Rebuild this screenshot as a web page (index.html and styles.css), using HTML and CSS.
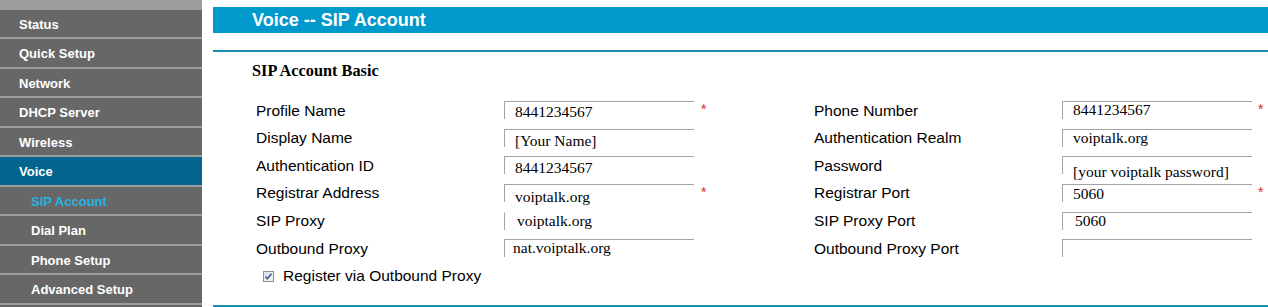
FILE: index.html
```html
<!DOCTYPE html>
<html>
<head>
<meta charset="utf-8">
<title>Voice -- SIP Account</title>
<link rel="stylesheet" href="styles.css">
</head>
<body>
<div class="page">
  <nav class="sidebar">
    <div class="nav-item">Status</div>
    <div class="nav-item">Quick Setup</div>
    <div class="nav-item">Network</div>
    <div class="nav-item">DHCP Server</div>
    <div class="nav-item">Wireless</div>
    <div class="nav-item active">Voice</div>
    <div class="nav-item sub current">SIP Account</div>
    <div class="nav-item sub">Dial Plan</div>
    <div class="nav-item sub">Phone Setup</div>
    <div class="nav-item sub">Advanced Setup</div>
    <div class="nav-item"></div>
  </nav>
  <main class="main">
    <div class="banner">Voice -- SIP Account</div>
    <div class="rule top-rule"></div>
    <h2 class="section-title">SIP Account Basic</h2>
    <div class="form-grid">
      <div class="label">Profile Name</div>
      <div class="cell"><div class="field pad-b">8441234567</div><span class="req">*</span></div>
      <div class="label">Phone Number</div>
      <div class="cell"><div class="field pad-a">8441234567</div><span class="req right">*</span></div>

      <div class="label">Display Name</div>
      <div class="cell"><div class="field pad-b2">[Your Name]</div></div>
      <div class="label">Authentication Realm</div>
      <div class="cell"><div class="field pad-a">voiptalk.org</div></div>

      <div class="label">Authentication ID</div>
      <div class="cell"><div class="field pad-b">8441234567</div></div>
      <div class="label">Password</div>
      <div class="cell"><div class="field pad-c">[your voiptalk password]</div></div>

      <div class="label">Registrar Address</div>
      <div class="cell"><div class="field pad-b2">voiptalk.org</div><span class="req">*</span></div>
      <div class="label">Registrar Port</div>
      <div class="cell"><div class="field pad-a2">5060</div><span class="req right">*</span></div>

      <div class="label">SIP Proxy</div>
      <div class="cell"><div class="field no-top pad-a indent">voiptalk.org</div></div>
      <div class="label">SIP Proxy Port</div>
      <div class="cell"><div class="field pad-a2 indent">5060</div></div>

      <div class="label">Outbound Proxy</div>
      <div class="cell"><div class="field pad-a outdent">nat.voiptalk.org</div></div>
      <div class="label">Outbound Proxy Port</div>
      <div class="cell"><div class="field"></div></div>
    </div>
    <label class="check-row">
      <svg class="checkbox" width="11" height="11" viewBox="0 0 11 11">
        <defs>
          <linearGradient id="cbg" x1="0" y1="0" x2="1" y2="1">
            <stop offset="0" stop-color="#d8dde6"/>
            <stop offset="1" stop-color="#f6f7f9"/>
          </linearGradient>
        </defs>
        <rect x="0.5" y="0.5" width="10" height="10" fill="url(#cbg)" stroke="#8e8f8f"/>
        <path d="M2.5 5.6 L4.4 7.8 L8.4 2.8" fill="none" stroke="#3d5a9e" stroke-width="1.6"/>
      </svg>
      <span>Register via Outbound Proxy</span>
    </label>
    <div class="rule bottom-rule"></div>
  </main>
</div>
</body>
</html>
```

FILE: styles.css
```css
html, body {
  margin: 0;
  padding: 0;
  background: #ffffff;
}

.page {
  display: flex;
  height: 307px;
  overflow: hidden;
}

.sidebar {
  width: 202px;
  flex: 0 0 202px;
  background: #9d9d9d;
  padding-top: 9.5px;
  box-sizing: border-box;
  height: 307px;
  overflow: hidden;
}

.nav-item {
  height: 27.5px;
  margin-bottom: 2px;
  box-sizing: border-box;
  padding: 2px 0 0 19px;
  line-height: 26px;
  background: #676767;
  color: #ffffff;
  font-family: "Liberation Sans", Arial, sans-serif;
  font-weight: bold;
  font-size: 13px;
  white-space: nowrap;
}

.nav-item.sub {
  padding-left: 31px;
}

.nav-item.active {
  background: #03658e;
}

.nav-item.current {
  color: #26b3e3;
}

.main {
  flex: 1;
  margin-left: 11px;
  display: flex;
  flex-direction: column;
}

.banner {
  margin-top: 7px;
  height: 26px;
  line-height: 26px;
  background: #0099cc;
  color: #ffffff;
  font-family: "Liberation Sans", Arial, sans-serif;
  font-weight: bold;
  font-size: 18px;
  padding-left: 39px;
  white-space: nowrap;
}

.rule {
  background: #1a8fb6;
}

.top-rule {
  margin-top: 17px;
  height: 3px;
}

.section-title {
  margin: 9.3px 0 0 0;
  padding-left: 39px;
  height: 20px;
  line-height: 20px;
  font-family: "Liberation Serif", "Times New Roman", serif;
  font-weight: bold;
  font-size: 16.3px;
  color: #000000;
}

.form-grid {
  margin-top: 19.7px;
  padding-left: 43px;
  display: grid;
  grid-template-columns: 248px 310px 248px 1fr;
  grid-auto-rows: 27.67px;
}

.label {
  font-family: "Liberation Sans", Arial, sans-serif;
  font-size: 15.5px;
  line-height: 18px;
  padding-top: 0.5px;
  color: #000000;
  white-space: nowrap;
}

.cell {
  display: flex;
  align-items: flex-start;
}

.field {
  width: 190px;
  height: 18px;
  box-sizing: border-box;
  border-top: 1px solid #a3a3a3;
  border-left: 1px solid #a3a3a3;
  padding-left: 10px;
  font-family: "Liberation Serif", "Times New Roman", serif;
  font-size: 15.5px;
  line-height: 16px;
  color: #000000;
  white-space: nowrap;
}

.field.no-top {
  border-top-color: transparent;
}

.field.pad-a { padding-top: 0; }
.field.pad-a2 { padding-top: 0.8px; }
.field.pad-b { padding-top: 2.4px; }
.field.pad-b2 { padding-top: 3.6px; }
.field.pad-c { padding-top: 6.8px; }

.field.indent { padding-left: 12px; }
.field.outdent { padding-left: 8px; }

.req {
  color: #e02424;
  font-family: "Liberation Sans", Arial, sans-serif;
  font-size: 14px;
  line-height: 14px;
  margin-left: 7px;
  margin-top: 1px;
}

.req.right {
  margin-left: 6px;
}

.check-row {
  display: flex;
  align-items: center;
  height: 18px;
  padding-left: 50px;
  font-family: "Liberation Sans", Arial, sans-serif;
  font-size: 15.5px;
  line-height: 18px;
  color: #000000;
}

.checkbox {
  margin-right: 9px;
  margin-top: 1px;
  flex: 0 0 auto;
}

.bottom-rule {
  margin-top: 20px;
  height: 3px;
}
```
